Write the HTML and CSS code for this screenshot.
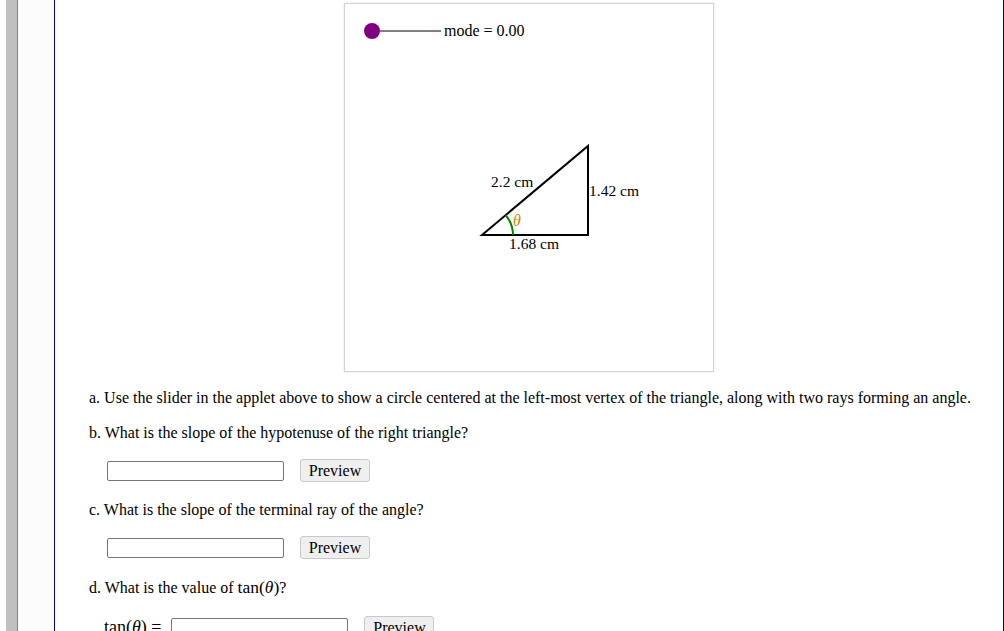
FILE: index.html
```html
<!DOCTYPE html>
<html>
<head>
<meta charset="utf-8">
<link rel="stylesheet" href="styles.css">
</head>
<body>
<div class="frame">
  <div class="edge"></div>
  <div class="scrollbar"></div>
  <div class="gutter"></div>
  <main class="main">
    <div class="applet">
      <svg class="applet-svg" width="368" height="368" viewBox="0 0 368 368">
        <line x1="35" y1="27" x2="96" y2="27" stroke="#808080" stroke-width="2"/>
        <circle cx="27" cy="27" r="8" fill="#800080"/>
        <text x="99" y="32" class="mode">mode = 0.00</text>
        <polygon points="137,231 243,231 243,142" fill="none" stroke="#000" stroke-width="2" stroke-linejoin="miter"/>
        <path d="M168 231 A31 31 0 0 0 160.7 211.1" fill="none" stroke="#008000" stroke-width="2"/>
        <text x="146" y="183" class="lbl">2.2 cm</text>
        <text x="244" y="192" class="lbl">1.42 cm</text>
        <text x="164" y="245" class="lbl">1.68 cm</text>
        <text x="168" y="222" class="theta">θ</text>
      </svg>
    </div>
    <div class="questions">
      <p class="q qa">a. Use the slider in the applet above to show a circle centered at the left-most vertex of the triangle, along with two rays forming an angle.</p>
      <p class="q qb">b. What is the slope of the hypotenuse of the right triangle?</p>
      <div class="answer">
        <input class="ans" type="text">
        <button class="preview" type="button">Preview</button>
      </div>
      <p class="q">c. What is the slope of the terminal ray of the angle?</p>
      <div class="answer">
        <input class="ans" type="text">
        <button class="preview" type="button">Preview</button>
      </div>
      <p class="q">d. What is the value of <span class="math">tan(<i>θ</i>)</span>?</p>
      <div class="answer answer-d">
        <span class="math eq">tan(<i>θ</i>) =</span>
        <input class="ans" type="text">
        <button class="preview" type="button">Preview</button>
      </div>
    </div>
  </main>
</div>
</body>
</html>
```
FILE: styles.css
```css
html, body {
  margin: 0;
  padding: 0;
  background: #fff;
}
body {
  font-family: "Liberation Serif", "Times New Roman", serif;
  font-size: 16px;
  color: #000;
  width: 1004px;
  height: 631px;
  overflow: hidden;
}
.frame {
  display: flex;
  height: 631px;
}
.edge {
  width: 6px;
  background: #fdfdfd;
}
.scrollbar {
  width: 11px;
  background: #c0c0c0;
  border-right: 1px solid #7f7f7f;
}
.gutter {
  width: 36px;
  background: #fcfcfc;
  border-right: 1px solid #000080;
}
.main {
  flex: 1;
  border-right: 1px solid #000080;
  padding-top: 3px;
  background: #fff;
}
.applet {
  width: 368px;
  height: 367px;
  margin: 0 auto;
  border: 1px solid #d3d3d3;
  box-shadow: 0 0 2px rgba(0,0,0,0.12);
  background: #fff;
  overflow: hidden;
}
.applet-svg {
  display: block;
}
.mode {
  font-family: "Liberation Serif", serif;
  font-size: 16px;
  fill: #000;
}
.lbl {
  font-family: "Liberation Serif", serif;
  font-size: 15.5px;
  fill: #000;
}
.theta {
  font-family: "Liberation Serif", serif;
  font-style: italic;
  font-size: 16px;
  fill: #c08a00;
}
.questions {
  padding-left: 34px;
  padding-top: 16px;
  display: flex;
  flex-direction: column;
}
.q {
  margin: 0;
  line-height: 20px;
  height: 20px;
  white-space: nowrap;
}
.qa {
  margin-bottom: 15px;
}
.answer {
  display: flex;
  align-items: center;
  gap: 16px;
  height: 23px;
  margin: 16px 0 18px 18px;
}
.answer-d {
  margin-left: 15px;
  margin-top: 19px;
  gap: 0;
}
.answer-d .eq {
  margin-right: 10px;
}
.answer-d .preview {
  margin-left: 16px;
}
.ans {
  box-sizing: border-box;
  width: 177px;
  height: 20px;
  border: 1px solid #767676;
  border-radius: 2px;
  padding: 1px 2px;
  margin: 0;
  background: #fff;
}
.preview {
  box-sizing: border-box;
  height: 23px;
  width: 70px;
  padding: 0 7px;
  margin: 0;
  font-family: "Liberation Serif", "Times New Roman", serif;
  font-size: 16px;
  color: #000;
  background: #efefef;
  border: 1px solid #c9c9c9;
  border-radius: 3px;
  line-height: 21px;
}
.math {
  font-family: "Liberation Serif", "DejaVu Serif", serif;
  font-size: 17.5px;
}
.eq {
  font-size: 18px;
}
.math i {
  font-style: italic;
}
```
